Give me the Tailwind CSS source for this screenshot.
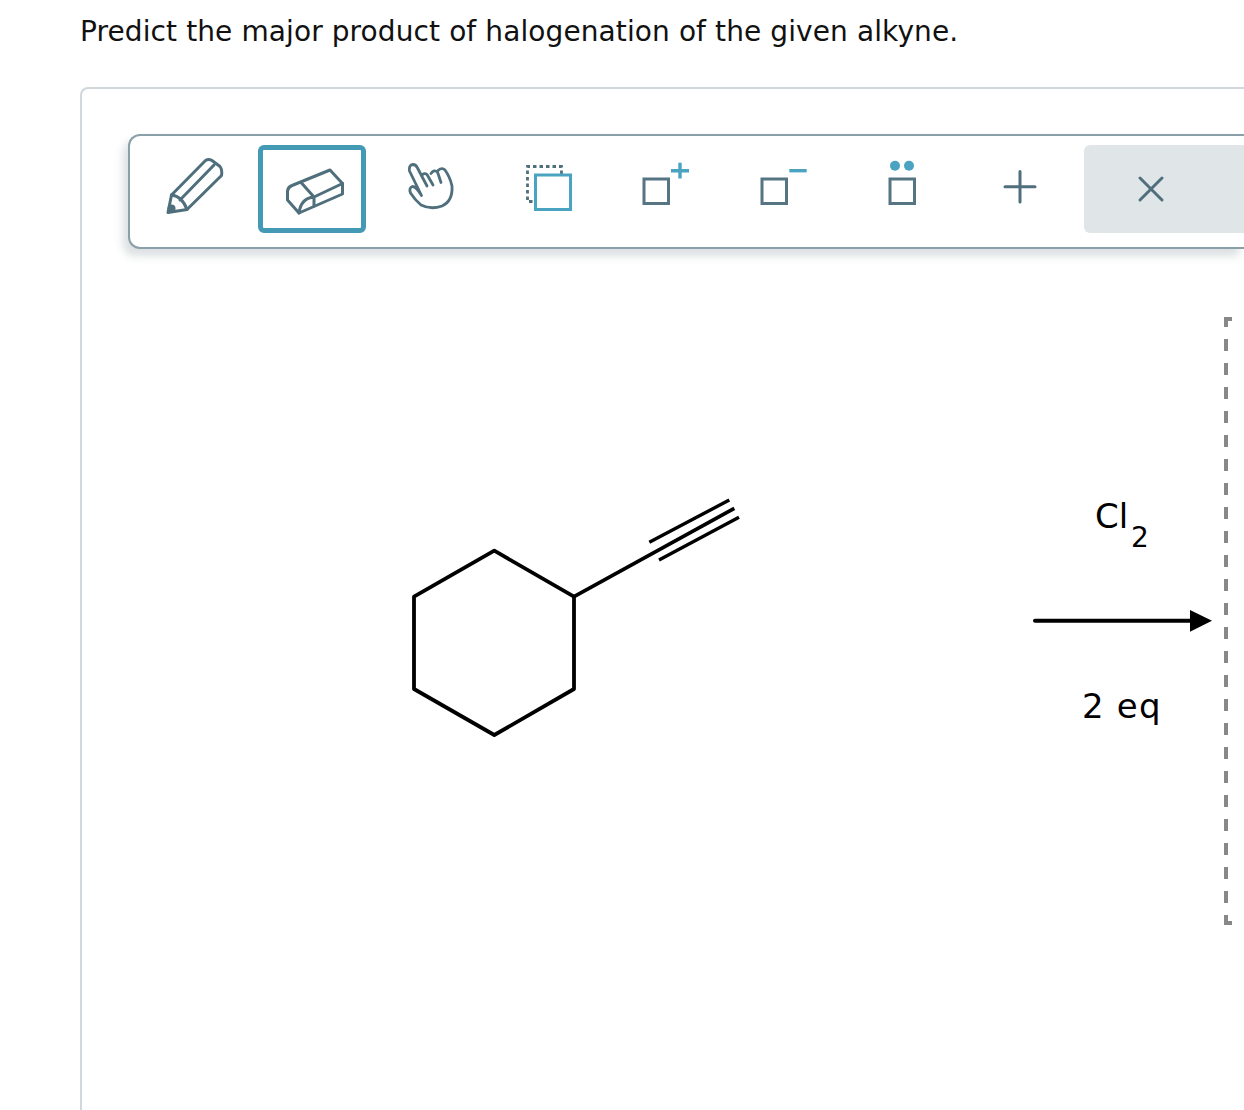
<!DOCTYPE html>
<html lang="en">
<head>
  <meta charset="UTF-8" />
  <title>Alkyne halogenation</title>
  <script src="https://cdn.jsdelivr.net/npm/@tailwindcss/browser@4"></script>
</head>
<body class="h-[1110px] overflow-hidden bg-white font-['DejaVu_Sans',sans-serif]">

  <!-- Question -->
  <h1 class="pl-[80px] pt-[15px] text-[28px] leading-[34px] tracking-[0.1px] font-normal text-[#111]">Predict the major product of halogenation of the given alkyne.</h1>

  <!-- Sketcher card, open at the right and bottom edges -->
  <div class="ml-[80px] mt-[38px] w-[1164px] h-[1023px] border-t-2 border-l-2 border-[#d0d8dc] rounded-tl-lg">

    <!-- Toolbar -->
    <div class="ml-[46px] mt-[45px] w-[1116px] h-[115px] flex gap-[10px] pl-[10px] pt-[9px] bg-white border-y-2 border-l-2 border-[#8a9fa8] rounded-l-xl shadow-[-5px_7px_9px_rgba(90,115,125,0.22)]">

      <!-- Pencil -->
      <button class="w-[108px] h-[88px] shrink-0">
        <svg class="block" width="108" height="88" viewBox="140 145 108 88" fill="none" stroke="#4f6f7c" stroke-width="3" stroke-linejoin="round" stroke-linecap="round">
          <path d="M168 212.500 L171.500 195 L205.500 160.500 Q208.500 158.500 212 160.500 L220 166.500 Q222.500 170 221.500 175.500 L187 209.500 Z" />
          <path d="M171.500 195 Q182 196 187 209.500 M180 200 L214 165" />
          <circle cx="171.500" cy="208.500" r="4" fill="#4f6f7c" stroke="none" />
        </svg>
      </button>

      <!-- Eraser (selected) -->
      <button class="w-[108px] h-[88px] shrink-0 border-[5px] border-[#4499b5] rounded-md">
        <svg class="block" width="98" height="78" viewBox="263 150 98 78" fill="none" stroke="#4f6f7c" stroke-width="3" stroke-linejoin="round" stroke-linecap="round">
          <path d="M330 170 L342.500 183.500 L342.500 194 L299 213 L287.500 200 L287.500 191 Q288 187 292 185.500 Z" />
          <path d="M301.500 183 L314 197 L342.500 183.500 M314 197 L314 206 M314 197 Q301 198 299 213" />
        </svg>
      </button>

      <!-- Hand -->
      <button class="w-[108px] h-[88px] shrink-0">
        <svg class="block" width="108" height="88" viewBox="376 145 108 88" fill="none" stroke="#4f6f7c" stroke-width="2.800" stroke-linejoin="round" stroke-linecap="round">
          <path d="M421.500 195.500 L409.500 171 Q408.500 165 413 164.500 Q416 164.500 417.500 168 L427 186 M421.500 176 Q424 172 427 174.500 L433 185 M431 173.500 Q434 169 437.500 172 L441 182.500 M438 170.500 Q442 167 445 170 Q450 177 452 186 Q453 201 442 206 Q431 210 421 205 Q415 200 410.500 193 Q408.500 188 412.500 186.500 Q416 186.500 421.500 195.500" />
        </svg>
      </button>

      <!-- Select -->
      <button class="w-[108px] h-[88px] shrink-0">
        <svg class="block" width="108" height="88" viewBox="494 145 108 88" fill="none">
          <path d="M561.500 174 L561.500 166.500 L527.500 166.500 L527.500 201.500 L535 201.500" stroke="#4f6f7c" stroke-width="2.800" stroke-dasharray="3.500 3" />
          <rect x="535.500" y="175" width="35" height="34.500" stroke="#4aa3c0" stroke-width="3" />
        </svg>
      </button>

      <!-- Positive charge -->
      <button class="w-[108px] h-[88px] shrink-0">
        <svg class="block" width="108" height="88" viewBox="612 145 108 88" fill="none">
          <rect x="644" y="179" width="24.500" height="24.500" stroke="#567583" stroke-width="3" />
          <path d="M671 170.700 L689 170.700 M680 162.700 L680 178.500" stroke="#4aa3c0" stroke-width="3.400" />
        </svg>
      </button>

      <!-- Negative charge -->
      <button class="w-[108px] h-[88px] shrink-0">
        <svg class="block" width="108" height="88" viewBox="730 145 108 88" fill="none">
          <rect x="762" y="179" width="24.500" height="24.500" stroke="#567583" stroke-width="3" />
          <path d="M789.300 170.700 L806.700 170.700" stroke="#4aa3c0" stroke-width="3.400" />
        </svg>
      </button>

      <!-- Lone pair -->
      <button class="w-[108px] h-[88px] shrink-0">
        <svg class="block" width="108" height="88" viewBox="848 145 108 88" fill="none">
          <rect x="890" y="179" width="24.500" height="24.500" stroke="#567583" stroke-width="3" />
          <circle cx="895" cy="165.700" r="5" fill="#4aa3c0" />
          <circle cx="909" cy="165.700" r="5" fill="#4aa3c0" />
        </svg>
      </button>

      <!-- Add -->
      <button class="w-[108px] h-[88px] shrink-0">
        <svg class="block" width="108" height="88" viewBox="966 145 108 88" fill="none" stroke="#4f6f7c" stroke-width="3" stroke-linecap="round">
          <path d="M1005 186.700 L1035 186.700 M1020 171.500 L1020 202" />
        </svg>
      </button>

      <!-- Clear, runs up to the window edge -->
      <button class="w-[160px] h-[88px] shrink-0 bg-[#e0e5e8] rounded-l-md">
        <svg class="block" width="160" height="88" viewBox="1084 145 160 88" fill="none" stroke="#4f6f7c" stroke-width="3" stroke-linecap="round">
          <path d="M1140 178 L1162 200 M1162 178 L1140 200" />
        </svg>
      </button>
    </div>

    <!-- Drawing area, viewBox is in page pixels -->
    <svg class="block" width="1162" height="861" viewBox="82 249 1162 861" fill="none">
      <path d="M494.300 550.700 L574 596.700 L574 689 L494.300 735 L414 689 L414 596.700 Z" stroke="#000" stroke-width="3.800" stroke-linejoin="round" />
      <path d="M574 596.700 L734.300 508.300" stroke="#000" stroke-width="3.600" />
      <path d="M649.300 542.300 L729.300 500 M659 560 L739 517.300" stroke="#000" stroke-width="3.400" />

      <text x="1095" y="528" font-size="34" fill="#000" stroke="none">Cl</text>
      <text x="1131" y="547" font-size="28" fill="#000" stroke="none">2</text>

      <path d="M1035 620.700 L1191 620.700" stroke="#000" stroke-width="4" stroke-linecap="round" />
      <path d="M1190 610 L1212 620.700 L1190 631.700 Z" fill="#000" />

      <text x="1082" y="718" font-size="34" letter-spacing="1.200" fill="#000" stroke="none">2 eq</text>

      <!-- Product bracket -->
      <path d="M1232 319 L1226 319 L1226 327" stroke="#888" stroke-width="4" />
      <path d="M1226 339 L1226 915" stroke="#888" stroke-width="4" stroke-dasharray="12 12" />
      <path d="M1226 915 L1226 923 L1232 923" stroke="#888" stroke-width="4" />
    </svg>
  </div>
</body>
</html>
